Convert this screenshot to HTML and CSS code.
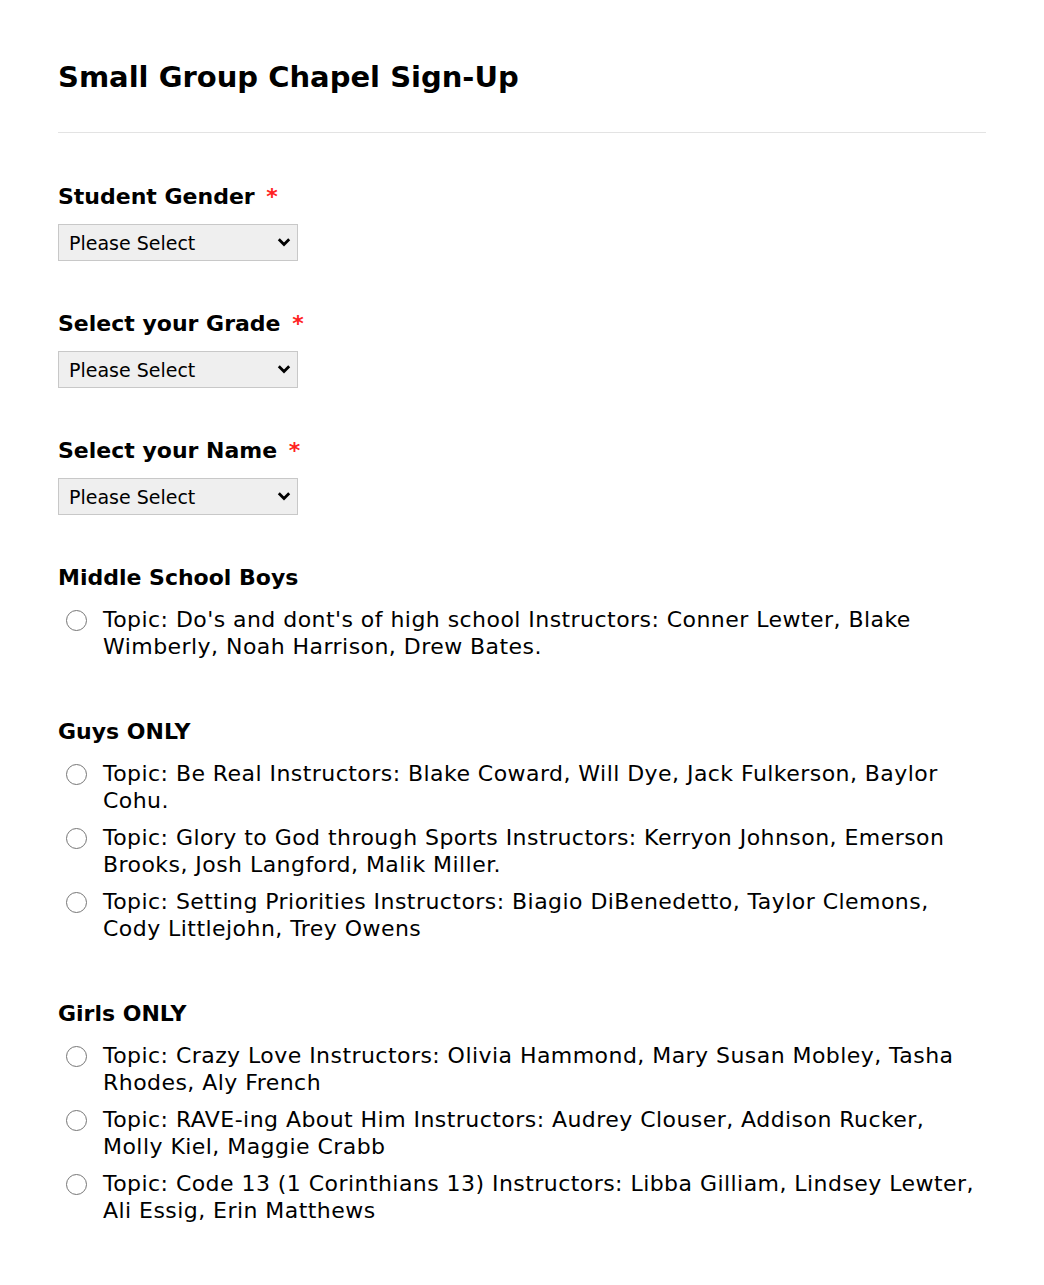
FILE: index.html
```html
<!DOCTYPE html>
<html lang="en">
<head>
<meta charset="UTF-8">
<meta name="viewport" content="width=device-width, initial-scale=1.0">
<title>Small Group Chapel Sign-Up</title>
<link rel="stylesheet" href="styles.css">
</head>
<body>
<div class="form">
  <!-- Form header -->
  <h1 class="form-title">Small Group Chapel Sign-Up</h1>
  <hr class="form-rule">

  <!-- Dropdown questions -->
  <div class="field">
    <label class="field-label" for="gender">Student Gender <span class="req">*</span></label>
    <div class="select-wrap">
      <select id="gender" class="dropdown">
        <option>Please Select</option>
        <option>Male</option>
        <option>Female</option>
      </select>
      <svg class="chevron" width="14" height="10" viewBox="0 0 14 10"><path d="M1.8 2.2 L7 7.4 L12.2 2.2" fill="none" stroke="#000" stroke-width="2.8"/></svg>
    </div>
  </div>

  <div class="field">
    <label class="field-label" for="grade">Select your Grade <span class="req">*</span></label>
    <div class="select-wrap">
      <select id="grade" class="dropdown">
        <option>Please Select</option>
      </select>
      <svg class="chevron" width="14" height="10" viewBox="0 0 14 10"><path d="M1.8 2.2 L7 7.4 L12.2 2.2" fill="none" stroke="#000" stroke-width="2.8"/></svg>
    </div>
  </div>

  <div class="field">
    <label class="field-label" for="name">Select your Name <span class="req">*</span></label>
    <div class="select-wrap">
      <select id="name" class="dropdown">
        <option>Please Select</option>
      </select>
      <svg class="chevron" width="14" height="10" viewBox="0 0 14 10"><path d="M1.8 2.2 L7 7.4 L12.2 2.2" fill="none" stroke="#000" stroke-width="2.8"/></svg>
    </div>
  </div>

  <!-- Radio groups -->
  <div class="group">
    <div class="group-label">Middle School Boys</div>
    <label class="option"><input type="radio" name="ms"><span>Topic: Do's and dont's of high school Instructors: Conner Lewter, Blake Wimberly, Noah Harrison, Drew Bates.</span></label>
  </div>

  <div class="group">
    <div class="group-label">Guys ONLY</div>
    <label class="option"><input type="radio" name="guys"><span>Topic: Be Real Instructors: Blake Coward, Will Dye, Jack Fulkerson, Baylor Cohu.</span></label>
    <label class="option"><input type="radio" name="guys"><span>Topic: Glory to God through Sports Instructors: Kerryon Johnson, Emerson Brooks, Josh Langford, Malik Miller.</span></label>
    <label class="option"><input type="radio" name="guys"><span>Topic: Setting Priorities Instructors: Biagio DiBenedetto, Taylor Clemons, Cody Littlejohn, Trey Owens</span></label>
  </div>

  <div class="group">
    <div class="group-label">Girls ONLY</div>
    <label class="option"><input type="radio" name="girls"><span>Topic: Crazy Love Instructors: Olivia Hammond, Mary Susan Mobley, Tasha Rhodes, Aly French</span></label>
    <label class="option"><input type="radio" name="girls"><span>Topic: RAVE-ing About Him Instructors: Audrey Clouser, Addison Rucker, Molly Kiel, Maggie Crabb</span></label>
    <label class="option"><input type="radio" name="girls"><span>Topic: Code 13 (1 Corinthians 13) Instructors: Libba Gilliam, Lindsey Lewter, Ali Essig, Erin Matthews</span></label>
  </div>
</div>
</body>
</html>
```

FILE: styles.css
```css
/* General page styles */
body {
  margin: 0;
  font-family: Verdana, "DejaVu Sans", sans-serif;
  background-color: #fff;
  color: #000;
}

/* Form container */
.form {
  width: 928px;
  padding: 55px 0 40px 58px;
}

.form-title {
  font-size: 29px;
  line-height: 44px;
  font-weight: bold;
  margin: 0;
}

.form-rule {
  border: none;
  border-top: 1px solid #e3e3e3;
  margin: 33px 0 50px;
}

/* Dropdown fields */
.field {
  margin-bottom: 49px;
}

.field-label {
  display: block;
  font-size: 22px;
  line-height: 28px;
  font-weight: bold;
  margin-bottom: 13px;
}

.req {
  color: #f22;
  margin-left: 4px;
}

.select-wrap {
  position: relative;
  width: 240px;
}

.dropdown {
  appearance: none;
  -webkit-appearance: none;
  width: 240px;
  height: 37px;
  padding: 0 10px;
  font-family: inherit;
  font-size: 19px;
  color: #000;
  background-color: #efefef;
  border: 1px solid #c8c8c8;
  border-radius: 0;
}

/* Chevron sits over the right end of the select */
.chevron {
  position: absolute;
  right: 7px;
  top: 13px;
  pointer-events: none;
}

/* Radio groups */
.group {
  margin-bottom: 58px;
}

.group-label {
  font-size: 22px;
  line-height: 28px;
  font-weight: bold;
  margin-bottom: 14px;
}

.option {
  display: flex;
  align-items: flex-start;
  padding-right: 6px;
  font-size: 22px;
  letter-spacing: 0.45px;
  line-height: 27px;
  margin-bottom: 10px;
}

.option input {
  appearance: none;
  -webkit-appearance: none;
  flex: none;
  width: 21px;
  height: 21px;
  margin: 4px 16px 0 8px;
  border: 1.5px solid #767676;
  border-radius: 50%;
  background: #fff;
}
```
